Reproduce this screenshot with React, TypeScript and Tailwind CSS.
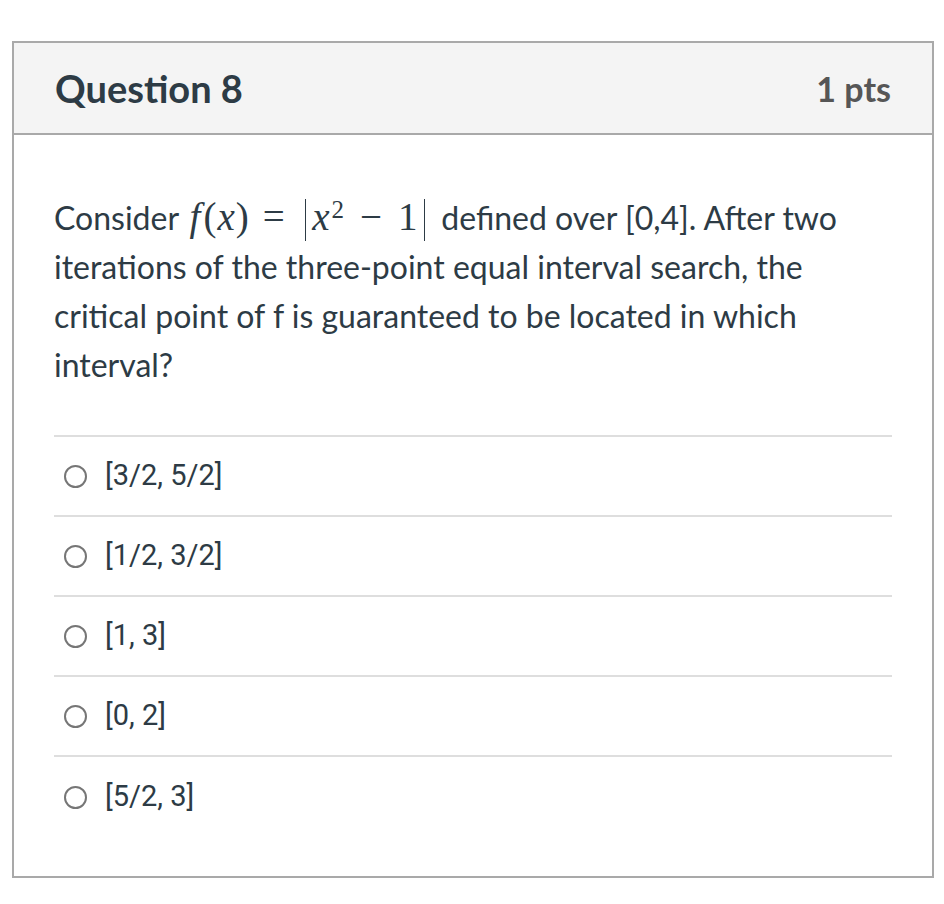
import React from 'react';

// Quiz question card: gray header band, prompt with inline math, radio answers.

const OPTIONS = ['[3/2, 5/2]', '[1/2, 3/2]', '[1, 3]', '[0, 2]', '[5/2, 3]'];

const LATO = "font-['Lato','Liberation_Sans',sans-serif]";
const MATH = "font-['Liberation_Serif','DejaVu_Serif',serif]";

function Bar() {
  return <span className="inline-block w-[1.5px] h-[42px] bg-[#2d3b45] align-[-11px] mx-[6px]" />;
}

function Formula() {
  return (
    <span className={`${MATH} text-[39px] leading-none whitespace-nowrap ml-[3px] mr-[2px]`}>
      <span className="italic">f</span>
      <span className="ml-[3px]">(</span>
      <span className="italic ml-[1px]">x</span>
      <span className="ml-[1px]">)</span>
      <span className="mx-[14px]">=</span>
      <Bar />
      <span className="italic">x</span>
      <sup className="text-[25px] ml-[2px]">2</sup>
      <span className="mx-[16px]">−</span>
      <span>1</span>
      <Bar />
    </span>
  );
}

function Radio() {
  return <span className="w-[23px] h-[23px] rounded-full border-2 border-[#767676] bg-white shrink-0" />;
}

export default function App() {
  return (
    <div className="w-[944px] h-[904px] bg-white pt-[41px] pl-[12px]">
      <div className="w-[922px] h-[837px] border-2 border-[#a9a9a9] bg-white">
        <div className={`h-[92px] bg-[#f4f4f4] border-b-2 border-[#a9a9a9] flex items-center justify-between px-[41px] ${LATO}`}>
          <h2 className="text-[38px] font-bold text-[#2d3b45]">Question 8</h2>
          <span className="text-[34px] font-bold text-[#565656]">1 pts</span>
        </div>

        <div className="px-[40px] pt-[58px]">
          <p className={`${LATO} text-[32px] leading-[49px] text-[#2d3b45]`}>
            Consider <Formula /> defined over [0,4]. After two iterations of the three-point equal
            interval search, the critical point of f is guaranteed to be located in which interval?
          </p>

          <div className="mt-[46px] border-t-2 border-[#dedede]">
            {OPTIONS.map((opt, i) => (
              <div
                key={opt}
                className={`h-[80px] flex items-center gap-[18px] pl-[10px] ${i < OPTIONS.length - 1 ? 'border-b-2 border-[#dedede]' : ''}`}
              >
                <Radio />
                <span className="font-['Roboto','Liberation_Sans',sans-serif] text-[29px] text-[#2d3b45]">{opt}</span>
              </div>
            ))}
          </div>
        </div>
      </div>
    </div>
  );
}
